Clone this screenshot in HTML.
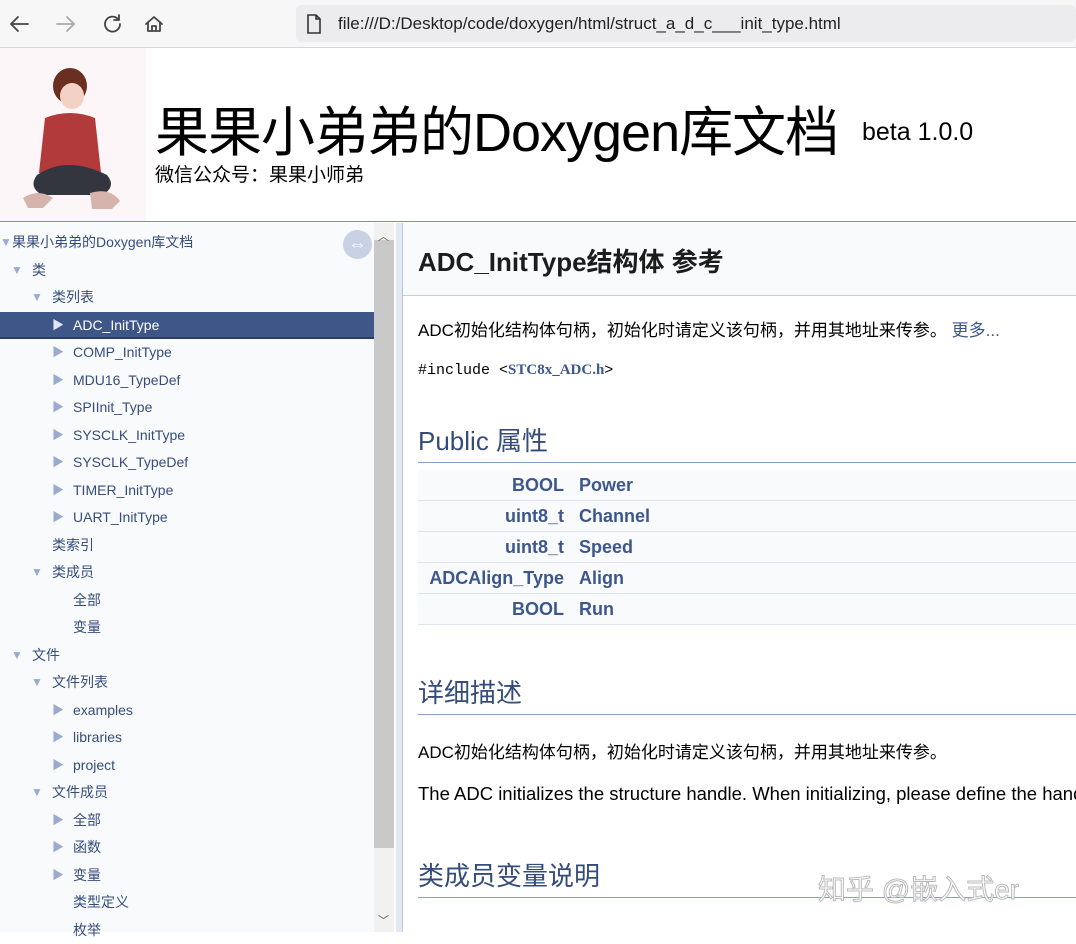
<!DOCTYPE html>
<html><head><meta charset="utf-8"><style>
*{margin:0;padding:0;box-sizing:border-box}
body{width:1076px;height:932px;overflow:hidden;background:#fff;font-family:"Liberation Sans","Noto Sans CJK SC",sans-serif;position:relative}
.abs{position:absolute}
#tb{left:0;top:0;width:1076px;height:48px;background:#f7f7f7;border-bottom:1px solid #d6d6d6}
#url{left:296px;top:5px;width:780px;height:37px;background:#ececee;border-radius:6px;font-size:17px;color:#222;line-height:37px;padding-left:42px}
#hdr{left:0;top:48px;width:1076px;height:174px;border-bottom:1px solid #7f8fa8}
#side{left:0;top:223px;width:374px;height:709px;background:#f9fafc;font-size:14px;color:#364d7c}
.it{position:absolute;height:27px;line-height:27px;white-space:nowrap}
.ar{position:absolute;font-size:12px;color:#9aaad0}
#content{left:403px;top:223px;width:673px;height:709px}
h2{font-weight:normal;font-size:26px;color:#354c7b;position:absolute;left:15px;right:0;border-bottom:1px solid #879ecb;height:40px;line-height:36px}
.row{position:absolute;left:15px;right:0;height:31px;background:#f9fafc;border-bottom:1px solid #dee4f0;font-weight:bold;font-size:18px;color:#3d578c;line-height:30px}
.row .t{position:absolute;right:512px}
.row .n{position:absolute;left:161px}
</style></head><body>
<div class="abs" id="tb">
<svg class="abs" style="left:8px;top:12px" width="160" height="24" viewBox="0 0 160 24" fill="none" stroke-width="1.8" stroke-linecap="round" stroke-linejoin="round">
<path d="M20 12H4M10 5L3 12l7 7" stroke="#444"/>
<path d="M49 12h16M59 5l7 7-7 7" stroke="#aaa"/>
<path d="M110 7a7.5 7.5 0 1 0 2 5M111 3v5h-5" stroke="#444"/>
<path d="M138 12l8-7 8 7M140 10v9h12v-9M144 19v-5h4v5" stroke="#444"/>
</svg>
<div class="abs" id="url">file:///D:/Desktop/code/doxygen/html/struct_a_d_c___init_type.html</div>
<svg class="abs" style="left:306px;top:14px" width="16" height="20" viewBox="0 0 16 20" fill="none" stroke="#333" stroke-width="1.6"><path d="M2 1h8l4 4v14H2z M10 1v4h4"/></svg>
</div>
<div class="abs" id="hdr">
<div class="abs" style="left:0;top:0;width:146px;height:173px;background:#fcf6f8"></div>
<svg class="abs" style="left:15px;top:15px" width="115" height="150" viewBox="0 0 115 150">
<ellipse cx="55" cy="23" rx="17" ry="18" fill="#6b2f22"/>
<ellipse cx="57" cy="33" rx="12" ry="13" fill="#f1d2c4"/>
<path d="M30 55q25-10 50 0l6 55h-62z" fill="#b33a3a"/>
<path d="M22 112q30-20 70 0q10 12-5 20h-60q-14-8-5-20z" fill="#33363f"/>
<path d="M8 135q15-10 30 0l-10 10h-15z M75 130q20-6 30 8l-8 8h-20z" fill="#d7b3ad"/>
</svg>
<div class="abs" style="left:155px;top:40px;font-size:54px;color:#000;letter-spacing:-1px">果果小弟弟的Doxygen库文档</div>
<div class="abs" style="left:862px;top:70px;font-size:25px;color:#000">beta 1.0.0</div>
<div class="abs" style="left:155px;top:112px;font-size:19px;color:#000">微信公众号：果果小师弟</div>
</div>
<div class="abs" id="side">
<div class="it" style="top:6px;left:12px;color:#364d7c"><span class="ar" style="left:-12px">▼</span>果果小弟弟的Doxygen库文档</div>
<div class="it" style="top:34px;left:32px"><span class="ar" style="left:-21px">▼</span>类</div>
<div class="it" style="top:61px;left:52px"><span class="ar" style="left:-21px">▼</span>类列表</div>
<div class="abs" style="top:89px;left:0;width:374px;height:27px;background:#3f5788;border-bottom:2px solid #2a3c64"></div>
<div class="it" style="top:89px;left:73px;color:#fff"><span class="ar" style="left:-21px;color:#dfe5f2">▶</span>ADC_InitType</div>
<div class="it" style="top:116px;left:73px"><span class="ar" style="left:-21px">▶</span>COMP_InitType</div>
<div class="it" style="top:144px;left:73px"><span class="ar" style="left:-21px">▶</span>MDU16_TypeDef</div>
<div class="it" style="top:171px;left:73px"><span class="ar" style="left:-21px">▶</span>SPIInit_Type</div>
<div class="it" style="top:199px;left:73px"><span class="ar" style="left:-21px">▶</span>SYSCLK_InitType</div>
<div class="it" style="top:226px;left:73px"><span class="ar" style="left:-21px">▶</span>SYSCLK_TypeDef</div>
<div class="it" style="top:254px;left:73px"><span class="ar" style="left:-21px">▶</span>TIMER_InitType</div>
<div class="it" style="top:281px;left:73px"><span class="ar" style="left:-21px">▶</span>UART_InitType</div>
<div class="it" style="top:309px;left:52px">类索引</div>
<div class="it" style="top:336px;left:52px"><span class="ar" style="left:-21px">▼</span>类成员</div>
<div class="it" style="top:364px;left:73px">全部</div>
<div class="it" style="top:391px;left:73px">变量</div>
<div class="it" style="top:419px;left:32px"><span class="ar" style="left:-21px">▼</span>文件</div>
<div class="it" style="top:446px;left:52px"><span class="ar" style="left:-21px">▼</span>文件列表</div>
<div class="it" style="top:474px;left:73px"><span class="ar" style="left:-21px">▶</span>examples</div>
<div class="it" style="top:501px;left:73px"><span class="ar" style="left:-21px">▶</span>libraries</div>
<div class="it" style="top:529px;left:73px"><span class="ar" style="left:-21px">▶</span>project</div>
<div class="it" style="top:556px;left:52px"><span class="ar" style="left:-21px">▼</span>文件成员</div>
<div class="it" style="top:584px;left:73px"><span class="ar" style="left:-21px">▶</span>全部</div>
<div class="it" style="top:611px;left:73px"><span class="ar" style="left:-21px">▶</span>函数</div>
<div class="it" style="top:639px;left:73px"><span class="ar" style="left:-21px">▶</span>变量</div>
<div class="it" style="top:666px;left:73px">类型定义</div>
<div class="it" style="top:694px;left:73px">枚举</div>
<div class="abs" style="left:343px;top:7px;width:29px;height:29px;border-radius:50%;background:#c9d2e4;color:#fff;font-size:18px;text-align:center;line-height:28px;font-weight:bold">⇔</div>
</div>
<div class="abs" style="left:374px;top:223px;width:20px;height:709px;background:#f1f1f1"></div>
<div class="abs" style="left:374px;top:240px;width:20px;height:608px;background:#c9c9c9"></div>
<div class="abs" style="left:378px;top:228px;font-size:11px;color:#555">︿</div>
<div class="abs" style="left:378px;top:912px;font-size:11px;color:#555">﹀</div>
<div class="abs" style="left:394px;top:223px;width:9px;height:709px;background:#e3e8f3;border-left:2px solid #fff;border-right:1px solid #b6c4df"></div>
<div class="abs" id="content">
<div class="abs" style="left:0;top:0;width:673px;height:73px;background:#f9fafc;border-bottom:1px solid #c4cfe5"></div>
<div class="abs" style="left:15px;top:19px;font-size:26px;font-weight:bold;color:#1c1c1c">ADC_InitType结构体 参考</div>
<div class="abs" style="left:15px;top:93px;font-size:17px;color:#000">ADC初始化结构体句柄，初始化时请定义该句柄，并用其地址来传参。 <span style="color:#3d578c">更多...</span></div>
<div class="abs" style="left:15px;top:139px;font-size:15px;font-family:'Liberation Mono',monospace;color:#000">#include &lt;<span style="color:#3d578c;font-weight:bold;font-family:'Liberation Serif',serif">STC8x_ADC.h</span>&gt;</div>
<h2 style="top:200px">Public 属性</h2>
<div class="row" style="top:247px"><span class="t">BOOL</span><span class="n">Power</span></div>
<div class="row" style="top:278px"><span class="t">uint8_t</span><span class="n">Channel</span></div>
<div class="row" style="top:309px"><span class="t">uint8_t</span><span class="n">Speed</span></div>
<div class="row" style="top:340px"><span class="t">ADCAlign_Type</span><span class="n">Align</span></div>
<div class="row" style="top:371px"><span class="t">BOOL</span><span class="n">Run</span></div>
<h2 style="top:452px">详细描述</h2>
<div class="abs" style="left:15px;top:515px;font-size:17px;color:#000">ADC初始化结构体句柄，初始化时请定义该句柄，并用其地址来传参。</div>
<div class="abs" style="left:15px;top:560px;font-size:18.5px;color:#000;white-space:nowrap">The ADC initializes the structure handle. When initializing, please define the handle</div>
<h2 style="top:635px">类成员变量说明</h2>
<div class="abs" style="left:415px;top:645px;font-size:28px;color:#fff;-webkit-text-stroke:1px #bbb;white-space:nowrap">知乎 @嵌入式er</div>
</div>
</body></html>
